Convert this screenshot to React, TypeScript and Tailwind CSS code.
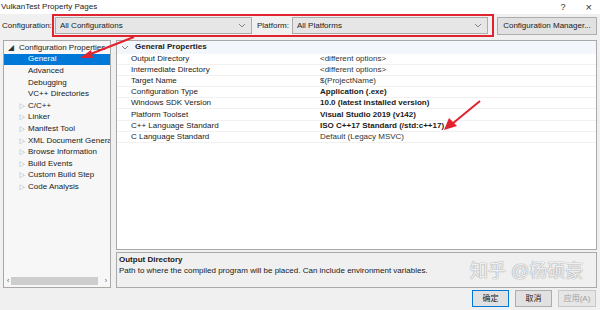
import React from 'react';

const treeItems = [
  { label: 'General', indent: true, selected: true },
  { label: 'Advanced', indent: true },
  { label: 'Debugging', indent: true },
  { label: 'VC++ Directories', indent: true },
  { label: 'C/C++', arrow: true },
  { label: 'Linker', arrow: true },
  { label: 'Manifest Tool', arrow: true },
  { label: 'XML Document Generator', arrow: true },
  { label: 'Browse Information', arrow: true },
  { label: 'Build Events', arrow: true },
  { label: 'Custom Build Step', arrow: true },
  { label: 'Code Analysis', arrow: true },
];

const props = [
  { name: 'Output Directory', value: '<different options>' },
  { name: 'Intermediate Directory', value: '<different options>' },
  { name: 'Target Name', value: '$(ProjectName)' },
  { name: 'Configuration Type', value: 'Application (.exe)', bold: true },
  { name: 'Windows SDK Version', value: '10.0 (latest installed version)', bold: true },
  { name: 'Platform Toolset', value: 'Visual Studio 2019 (v142)', bold: true },
  { name: 'C++ Language Standard', value: 'ISO C++17 Standard (/std:c++17)', bold: true },
  { name: 'C Language Standard', value: 'Default (Legacy MSVC)' },
];

function Chevron() {
  return (
    <svg width="8" height="5" viewBox="0 0 8 5" className="shrink-0">
      <path d="M1 1 L4 4 L7 1" fill="none" stroke="#777" strokeWidth="0.9" />
    </svg>
  );
}

function Combo({ text, width }: { text: string; width: string }) {
  return (
    <div className={`${width} h-[17px] bg-[#e6e6e6] border border-[#acacac] flex items-center justify-between pl-[4px] pr-[5px] whitespace-nowrap`}>
      <span>{text}</span>
      <Chevron />
    </div>
  );
}

function App() {
  return (
    <div
      className="relative w-[600px] h-[310px] overflow-hidden bg-[#f0f0f0] text-[8px] leading-none text-[#1a1a1a]"
      style={{ fontFamily: '"Liberation Sans", "Noto Sans CJK SC", sans-serif' }}
    >
      {/* title bar */}
      <div className="h-[14px] flex items-center justify-between pl-[1px] pr-[8px] bg-white">
        <span className="text-[#222]">VulkanTest Property Pages</span>
        <div className="flex items-center gap-[20px] text-[#333] text-[9px]">
          <span>?</span>
          <span className="text-[11px]">×</span>
        </div>
      </div>

      {/* configuration row */}
      <div className="flex items-center h-[23px] pl-[2px] whitespace-nowrap">
        <span className="w-[50px]">Configuration:</span>
        <div className="flex items-center h-[23px] border-2 border-[#e0232e] pl-[1px] pr-[4px]">
          <Combo text="All Configurations" width="w-[197px]" />
          <span className="w-[35px] ml-[5px]">Platform:</span>
          <Combo text="All Platforms" width="w-[196px]" />
        </div>
        <div className="ml-[3px] w-[100px] h-[18px] bg-[#e1e1e1] border border-[#adadad] flex items-center justify-center">
          Configuration Manager...
        </div>
      </div>

      {/* main area */}
      <div className="flex mt-[3px] pl-[3px] pr-[3px] h-[248px]">
        {/* tree */}
        <div className="w-[108px] h-full bg-[#f7f7f7] border border-[#a9a9a9] flex flex-col overflow-hidden">
          <div className="flex-1 pt-[1px]">
            <div className="flex items-center h-[11.6px] pl-[4px] gap-[5px] whitespace-nowrap">
              <span className="text-[6px] text-[#333]">◢</span>
              <span>Configuration Properties</span>
            </div>
            {treeItems.map((it) => (
              <div
                key={it.label}
                className={`flex items-center h-[11.6px] whitespace-nowrap ${it.selected ? 'bg-[#0078d7] text-white' : ''}`}
              >
                <span className="w-[15px] shrink-0" />
                <span className="w-[9px] shrink-0 text-[6px] text-[#555]">{it.arrow ? '▷' : ''}</span>
                <span>{it.label}</span>
              </div>
            ))}
          </div>
          <div className="h-[11px] flex items-center px-[3px] gap-[2px] mb-[1px]">
            <span className="text-[7px] text-[#555]">‹</span>
            <div className="flex-1 h-[8px] bg-[#cdcdcd] mr-[5px]" />
            <span className="text-[7px] text-[#555]">›</span>
          </div>
        </div>

        {/* right column */}
        <div className="flex-1 ml-[5px] flex flex-col gap-[2px]">
          <div className="h-[210px] bg-white border border-[#a9a9a9] whitespace-nowrap">
            <div className="flex items-center h-[12.5px] bg-[#f3f6fb] pl-[4px] gap-[6px] font-bold">
              <Chevron />
              <span>General Properties</span>
            </div>
            {props.map((p) => (
              <div key={p.name} className="flex items-center h-[11.2px] border-b border-[#f1f1f1]">
                <span className="w-[203px] pl-[14px] shrink-0">{p.name}</span>
                <span className={p.bold ? 'font-bold' : 'text-[#333]'}>{p.value}</span>
              </div>
            ))}
          </div>
          <div className="flex-1 bg-[#f0f0f0] border border-[#a9a9a9] pl-[2px] pt-[3px] flex flex-col gap-[3px]">
            <span className="font-bold">Output Directory</span>
            <span>Path to where the compiled program will be placed. Can include environment variables.</span>
          </div>
        </div>
      </div>

      {/* buttons */}
      <div className="flex justify-end gap-[6px] pr-[4px] mt-[2px]">
        <div className="w-[37px] h-[17px] bg-[#e1e1e1] border border-[#0078d7] flex items-center justify-center">确定</div>
        <div className="w-[37px] h-[17px] bg-[#e1e1e1] border border-[#adadad] flex items-center justify-center">取消</div>
        <div className="w-[38px] h-[17px] bg-[#e6e6e6] border border-[#c8c8c8] flex items-center justify-center text-[#a0a0a0]">应用(A)</div>
      </div>

      {/* watermark */}
      <div
        className="absolute left-[470px] top-[262px] text-[18px] text-white/85 whitespace-nowrap"
        style={{ textShadow: '0 0 1px #999, 0 0 1px #999' }}
      >
        知乎 @杨硕豪
      </div>

      {/* annotation arrows */}
      <svg className="absolute left-0 top-0 pointer-events-none" width="600" height="310">
        <line x1="134" y1="37" x2="88" y2="55" stroke="#e0232e" strokeWidth="2" />
        <polygon points="80,58 91,50 93,58" fill="#e0232e" />
        <line x1="480" y1="101" x2="452" y2="124" stroke="#e0232e" strokeWidth="2" />
        <polygon points="444,130 449,118 457,126" fill="#e0232e" />
      </svg>
    </div>
  );
}

export default App;
